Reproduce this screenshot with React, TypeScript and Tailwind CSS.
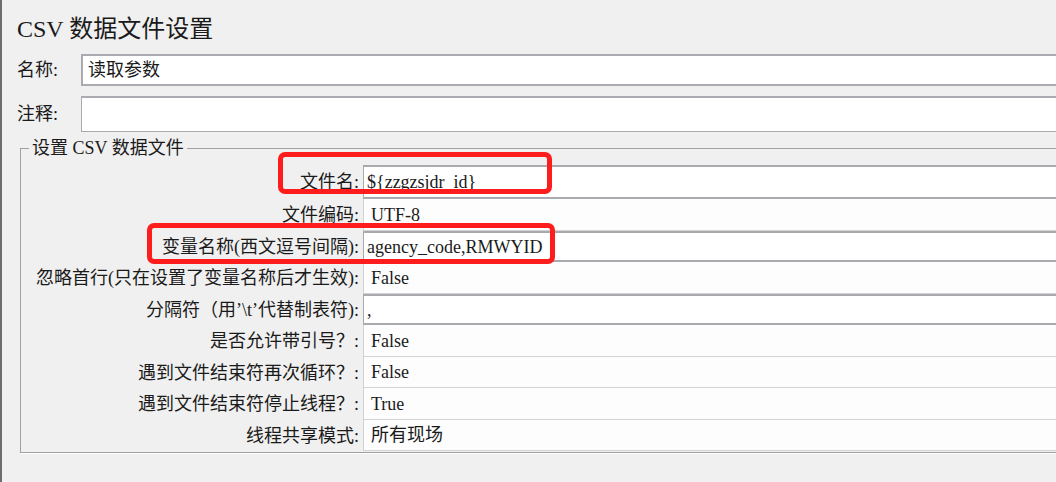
import React from "react";

type Row = { label: string; value: string; field?: boolean; h: number };

const rows: Row[] = [
  { label: "文件名:", value: "${zzgzsjdr_id}", field: true, h: 34 },
  { label: "文件编码:", value: "UTF-8", h: 32 },
  { label: "变量名称(西文逗号间隔):", value: "agency_code,RMWYID", field: true, h: 31 },
  { label: "忽略首行(只在设置了变量名称后才生效):", value: "False", h: 32 },
  { label: "分隔符（用’\\t’代替制表符):", value: ",", field: true, h: 31 },
  { label: "是否允许带引号？:", value: "False", h: 32 },
  { label: "遇到文件结束符再次循环？:", value: "False", h: 31 },
  { label: "遇到文件结束符停止线程？:", value: "True", h: 32 },
  { label: "线程共享模式:", value: "所有现场", h: 31 },
];

export default function App() {
  return (
    <div
      className="relative w-[1056px] h-[482px] overflow-hidden bg-[#f0f0f0] border-l-2 border-[#6d6d6d] text-[#1a1a1a]"
      style={{ fontFamily: '"Liberation Serif", "Noto Sans CJK SC", serif' }}
    >
      <div className="pl-[15px] pt-[13px] h-[45px] text-[24px] leading-[32px]">CSV 数据文件设置</div>

      <div className="mt-[9px] flex items-center h-[32px]">
        <div className="w-[79px] shrink-0 pl-[15px] text-[18px] leading-[24px]">名称:</div>
        <div className="w-[1000px] shrink-0 h-[32px] border-2 border-[#aaaab0] bg-white pl-[5px] text-[18px] leading-[28px]">
          读取参数
        </div>
      </div>

      <div className="mt-[10px] flex items-center h-[36px]">
        <div className="w-[79px] shrink-0 pl-[15px] text-[18px] leading-[24px]">注释:</div>
        <div className="w-[1000px] shrink-0 h-[36px] border border-t-2 border-[#aaaab0] bg-white"></div>
      </div>

      <fieldset className="mt-[4px] ml-[18px] w-[1060px] border border-[#a0a0a0] shadow-[1px_1px_0_#ffffff] pb-[1px]">
        <legend className="ml-[8px] px-[3px] text-[18px] leading-[24px]">设置 CSV 数据文件</legend>
        <div className="pt-[5px] grid grid-cols-[342px_1fr]">
          {rows.map((r, i) => (
            <React.Fragment key={i}>
              <div
                className="flex items-center justify-end pr-[4px] text-[18px] leading-[24px] whitespace-nowrap"
                style={{ height: r.h }}
              >
                {r.label}
              </div>
              <div
                className={
                  r.field
                    ? "flex items-center border-y-2 border-l border-[#a9a9ae] bg-white pl-[3px] text-[18px] leading-[24px]"
                    : "flex items-center border-b border-l border-[#d3d3d3] bg-[#fdfdfd] pl-[7px] text-[18px] leading-[24px]"
                }
                style={{ height: r.h }}
              >
                {r.value}
              </div>
            </React.Fragment>
          ))}
        </div>
      </fieldset>

      <div className="absolute left-[276px] top-[152px] w-[274px] h-[42px] border-[5px] border-[#fe1c1c] rounded-[7px]"></div>
      <div className="absolute left-[145px] top-[223px] w-[408px] h-[41px] border-[5px] border-[#fe1c1c] rounded-[7px]"></div>
    </div>
  );
}
